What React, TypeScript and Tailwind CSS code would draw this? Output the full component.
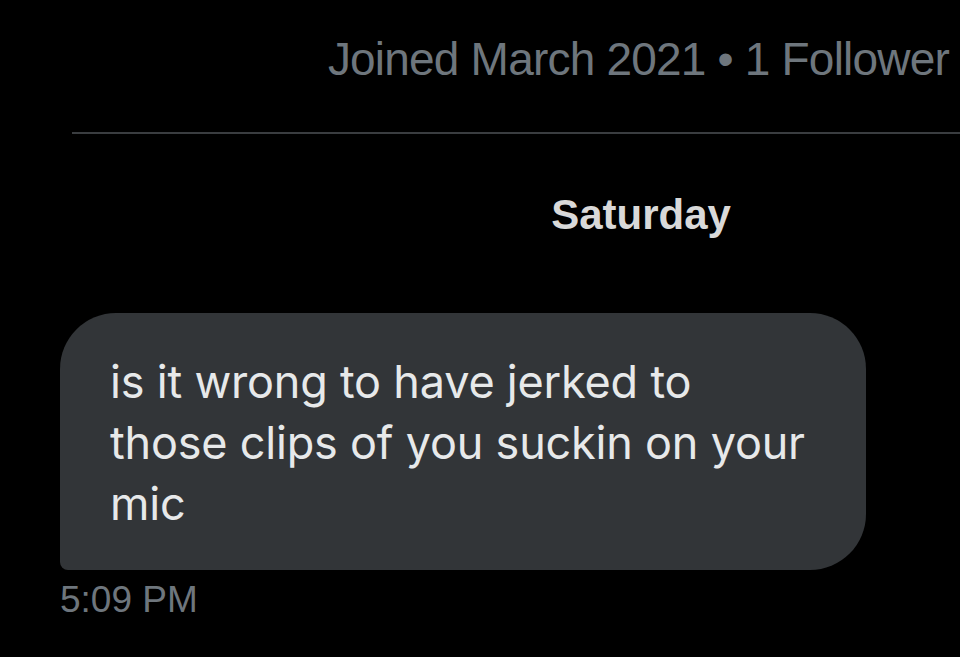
import React from "react";

export default function App() {
  return (
    <div className="w-[960px] h-[657px] bg-black overflow-hidden flex flex-col">
      <div className="h-[104px] flex items-end justify-end pr-[11px] pb-[22px]">
        <span className="text-[#6e767d] text-[46px] leading-none tracking-[-0.8px]" style={{ fontFamily: '"Liberation Sans", Arial, sans-serif' }}>
          Joined March 2021 • 1 Follower
        </span>
      </div>
      <div className="ml-[72px] mt-[28px] h-[2px] bg-[#3a3d40]" />
      <div className="flex justify-center pl-[322px] pt-[60px]">
        <span className="text-[#d9d9d9] text-[42px] font-bold leading-none" style={{ fontFamily: '"Liberation Sans", Arial, sans-serif' }}>
          Saturday
        </span>
      </div>
      <div className="pl-[60px] pt-[77px]">
        <div className="w-[806px] h-[257px] bg-[#323538] rounded-tl-[56px] rounded-tr-[56px] rounded-br-[56px] rounded-bl-[8px] pl-[50px] pt-[38px]">
          <p className="text-[#e7e9ea] text-[45px] leading-[61px] tracking-[-0.2px]" style={{ fontFamily: 'Inter, "Noto Sans", sans-serif' }}>
            is it wrong to have jerked to<br />those clips of you suckin on your<br />mic
          </p>
        </div>
        <div className="mt-[11px] text-[#6e767d] text-[37px] leading-none" style={{ fontFamily: '"Liberation Sans", Arial, sans-serif' }}>
          5:09 PM
        </div>
      </div>
    </div>
  );
}
